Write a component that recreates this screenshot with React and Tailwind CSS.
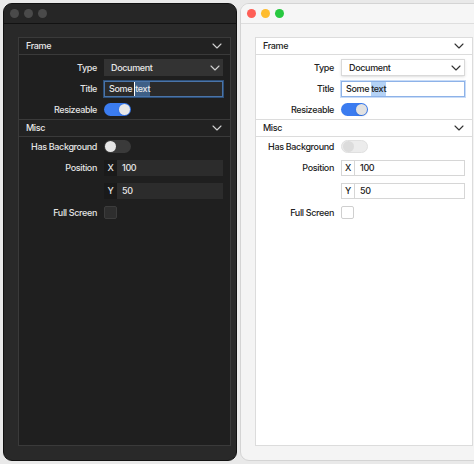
import React from 'react';

const FONT = { fontFamily: 'Inter, "Liberation Sans", sans-serif' };

function Chevron({ dark }) {
  return (
    <svg width="10" height="6" viewBox="0 0 10 6" fill="none">
      <path d="M1 1L5 5L9 1" stroke={dark ? '#d0d0d0' : '#333'} strokeWidth="1.1" strokeLinecap="round" strokeLinejoin="round" />
    </svg>
  );
}

function Row({ label, dark, h, children }) {
  return (
    <div className={`flex items-center ${h}`}>
      <div className={`w-[78px] shrink-0 text-right ${dark ? 'text-[#e4e4e4]' : 'text-[#222]'}`}>{label}</div>
      <div className="ml-[7px] mr-[7px] flex flex-1 items-center">{children}</div>
    </div>
  );
}

function Header({ title, dark, top }) {
  return (
    <div
      className={`flex items-center justify-between pl-[7px] pr-[8px] ${top ? 'h-[17px]' : 'h-[18px] border-t'} ${dark ? 'bg-[#222] text-[#e8e8e8] border-[#3a3a3a]' : 'bg-white text-[#222] border-[#dcdcdc]'} border-b`}
    >
      <span>{title}</span>
      <Chevron dark={dark} />
    </div>
  );
}

function Toggle({ on, dark }) {
  if (on) {
    return (
      <div className="flex h-[13px] w-[27px] items-center justify-end rounded-full bg-[#3b7cf0] pr-[1px]">
        <div className={`h-[11px] w-[11px] rounded-full ${dark ? 'bg-[#e8e8e8]' : 'bg-[#e2e2e2]'} shadow-sm`} />
      </div>
    );
  }
  return (
    <div className={`flex h-[13px] w-[27px] items-center rounded-full pl-[1px] ${dark ? 'bg-[#3a3a3a]' : 'bg-[#ececec] border border-[#e0e0e0]'}`}>
      <div className={`h-[11px] w-[11px] rounded-full ${dark ? 'bg-[#e6e6e6]' : 'bg-[#dcdcdc]'}`} />
    </div>
  );
}

function AxisInput({ axis, value, dark }) {
  return (
    <div className={`flex h-[16px] flex-1 items-stretch ${dark ? 'bg-[#2c2c2c]' : 'bg-white border border-[#d6d6d6]'}`}>
      <div className={`flex w-[13px] items-center justify-center ${dark ? 'bg-[#1a1a1a] text-[#e8e8e8]' : 'bg-white text-[#222] border-r border-[#d6d6d6]'}`}>{axis}</div>
      <div className={`flex items-center pl-[5px] ${dark ? 'text-[#e8e8e8]' : 'text-[#222]'}`}>{value}</div>
    </div>
  );
}

function Panel({ dark }) {
  const text = dark ? 'text-[#e8e8e8]' : 'text-[#222]';
  return (
    <div className={`flex-1 border ${dark ? 'bg-[#1f1f1f] border-[#3a3a3a]' : 'bg-white border-[#dcdcdc]'}`}>
      <Header title="Frame" dark={dark} top />
      <div className="flex flex-col gap-[5px] pb-[3px] pt-[4px]">
        <Row label="Type" dark={dark} h="h-[17px]">
          <div className={`flex h-[17px] flex-1 items-center justify-between pl-[7px] pr-[3px] ${dark ? 'bg-[#333]' : 'bg-white border border-[#d9d9d9] shadow-sm'} ${text}`}>
            <span>Document</span>
            <Chevron dark={dark} />
          </div>
        </Row>
        <Row label="Title" dark={dark} h="h-[16px]">
          <div className={`flex h-[16px] flex-1 items-center pl-[4px] ${dark ? 'bg-[#2a2a2a] border border-[#4a74a8] ring-1 ring-[#2d4f78]' : 'bg-white border border-[#8db2e8] ring-1 ring-[#c9dcf7]'} ${text}`}>
            <span>Some&nbsp;</span>
            <span className={dark ? 'bg-[#3e5f86] border-l border-white' : 'bg-[#b4d2f6]'}>text</span>
          </div>
        </Row>
        <div className="pt-[1px]">
          <Row label="Resizeable" dark={dark} h="h-[13px]">
            <Toggle on dark={dark} />
          </Row>
        </div>
      </div>
      <Header title="Misc" dark={dark} />
      <div className="flex flex-col gap-[7px] pt-[3px]">
        <Row label="Has Background" dark={dark} h="h-[13px]">
          <Toggle dark={dark} />
        </Row>
        <Row label="Position" dark={dark} h="h-[16px]">
          <AxisInput axis="X" value="100" dark={dark} />
        </Row>
        <Row label="" dark={dark} h="h-[16px]">
          <AxisInput axis="Y" value="50" dark={dark} />
        </Row>
        <Row label="Full Screen" dark={dark} h="h-[13px]">
          <div className={`h-[13px] w-[13px] rounded-[2px] ${dark ? 'bg-[#2e2e2e] border border-[#3c3c3c]' : 'bg-white border border-[#cfcfcf]'}`} />
        </Row>
      </div>
    </div>
  );
}

function Window({ dark }) {
  return (
    <div
      className={`flex h-[458px] shrink-0 flex-col overflow-hidden ${dark ? 'w-[234px] rounded-[9px] bg-[#292929] border border-[#111]' : 'w-[240px] rounded-l-[9px] bg-[#f4f4f4] border border-[#d4d4d4]'}`}
    >
      <div className={`flex h-[20px] shrink-0 items-center gap-[5px] pl-[6px] border-b ${dark ? 'bg-[#262626] border-[#121212]' : 'bg-[#f6f6f6] border-[#dedede]'}`}>
        <div className={`h-[9px] w-[9px] rounded-full ${dark ? 'bg-[#4a4a4a]' : 'bg-[#fe5f57]'}`} />
        <div className={`h-[9px] w-[9px] rounded-full ${dark ? 'bg-[#4a4a4a]' : 'bg-[#febc2e]'}`} />
        <div className={`h-[9px] w-[9px] rounded-full ${dark ? 'bg-[#4a4a4a]' : 'bg-[#28c840]'}`} />
      </div>
      <div className={`flex flex-1 flex-col pb-[14px] pl-[14px] pt-[13px] ${dark ? 'pr-[5px]' : 'pr-[6px]'}`}>
        <Panel dark={dark} />
      </div>
    </div>
  );
}

export default function App() {
  return (
    <div className="flex h-[464px] w-[474px] gap-[3px] overflow-hidden bg-[#e9e9e9] pl-[3px] pt-[3px] text-[9px] font-medium tracking-[-0.35px]" style={FONT}>
      <Window dark />
      <Window />
    </div>
  );
}
